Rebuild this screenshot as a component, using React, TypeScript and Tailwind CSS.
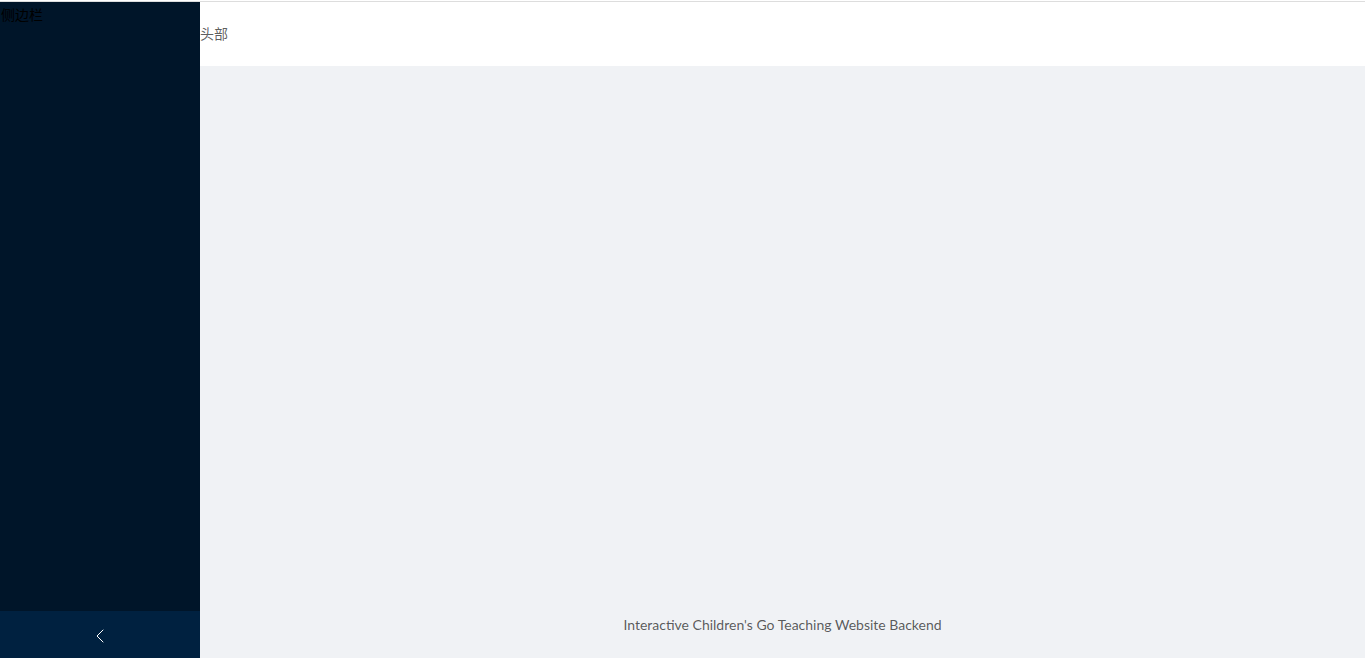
import { ChevronLeft } from "lucide-react"

export default function App() {
  return (
    <div className="h-[658px] flex flex-col bg-white font-['Lato','Noto_Sans_CJK_SC',sans-serif] text-sm">
      <div className="h-px shrink-0 bg-white" />
      <div className="h-px shrink-0 bg-[#dddddd]" />
      <div className="flex flex-1 min-h-0">
        <aside className="w-[200px] shrink-0 bg-[#001529] flex flex-col">
          <div className="flex-1 text-black leading-[22px] pt-[2px] pl-px">侧边栏</div>
          <button className="h-[47px] bg-[#002140] text-white flex items-center justify-center pt-[2px]">
            <ChevronLeft className="w-6 h-6" strokeWidth={1} />
          </button>
        </aside>
        <div className="flex-1 flex flex-col bg-[#f0f2f5]">
          <header className="h-16 bg-white leading-[64px] text-[rgba(0,0,0,0.65)]">头部</header>
          <main className="flex-1" />
          <footer className="pt-6 pb-[22px] px-[50px] text-center leading-[22px] text-[rgba(0,0,0,0.65)]">
            Interactive Children's Go Teaching Website Backend
          </footer>
        </div>
      </div>
    </div>
  )
}
